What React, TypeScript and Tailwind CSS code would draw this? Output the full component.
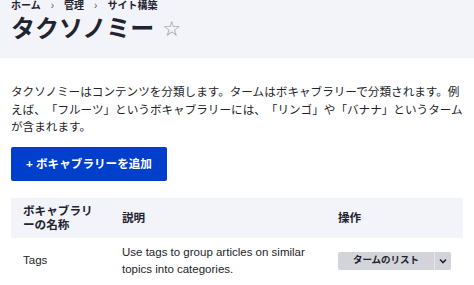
import React from "react";

export default function App() {
  const font = "font-['Liberation_Sans','Noto_Sans_CJK_JP',sans-serif]";
  return (
    <div className={`w-[474px] h-[285px] overflow-hidden bg-white text-[#222330] ${font} [text-spacing-trim:space-all]`}>
      <div className="bg-[#f3f4f9] h-[58px] px-[11px] overflow-hidden">
        <nav className="-mt-[1px] h-[14px] flex items-center text-[10px] leading-[14px] font-bold text-[#222330]">
          <span>ホーム</span>
          <span className="mx-[10px] text-[#55565b] font-normal">›</span>
          <span>管理</span>
          <span className="mx-[10px] text-[#55565b] font-normal">›</span>
          <span>サイト構築</span>
        </nav>
        <div className="mt-[1px] flex items-center h-[30px]">
          <h1 className="text-[24px] leading-[30px] font-bold text-[#222330]">タクソノミー</h1>
          <span className="ml-[8px] text-[21px] leading-[30px] text-[#8e929c] font-['DejaVu_Sans',sans-serif]">☆</span>
        </div>
      </div>

      <div className="px-[11px]">
        <p className="mt-[25px] w-[458px] text-[11.6px] leading-[17.5px] text-[#232429] font-['Noto_Sans_CJK_JP',sans-serif] [text-spacing-trim:space-all]">
          タクソノミーはコンテンツを分類します。タームはボキャブラリーで分類されます。例えば、「フルーツ」というボキャブラリーには、「リンゴ」や「バナナ」というタームが含まれます。
        </p>

        <button className="mt-[11px] h-[34px] w-[156px] rounded-[2px] bg-[#003ecc] text-white text-[11.6px] font-bold flex items-center justify-center">
          + ボキャブラリーを追加
        </button>

        <table className="mt-[17px] w-[452px] border-collapse table-fixed">
          <colgroup>
            <col className="w-[99px]" />
            <col className="w-[216px]" />
            <col className="w-[137px]" />
          </colgroup>
          <thead>
            <tr className="bg-[#f3f4f9] h-[40px]">
              <th className="px-[12px] py-[6px] text-left text-[11.6px] leading-[14px] font-bold align-middle">
                ボキャブラリーの名称
              </th>
              <th className="px-[12px] py-[6px] text-left text-[11.6px] leading-[14px] font-bold align-middle">
                説明
              </th>
              <th className="px-[12px] py-[6px] text-left text-[11.6px] leading-[14px] font-bold align-middle">
                操作
              </th>
            </tr>
          </thead>
          <tbody>
            <tr>
              <td className="px-[12px] py-[6px] text-[11.5px] leading-[17px] align-middle text-[#232429]">Tags</td>
              <td className="px-[12px] py-[6px] text-[11.5px] leading-[17px] align-middle text-[#232429]">
                Use tags to group articles on similar topics into categories.
              </td>
              <td className="px-[12px] py-[6px] align-middle">
                <div className="flex h-[18px] w-[113px] rounded-[2px] bg-[#d3d4d9] overflow-hidden">
                  <span className="w-[96px] flex items-center justify-center text-[9.5px] font-bold text-[#222330]">
                    タームのリスト
                  </span>
                  <span className="w-px bg-[#e6e7eb]" />
                  <span className="flex-1 flex items-center justify-center">
                    <svg width="8" height="6" viewBox="0 0 8 6">
                      <path d="M1 1.5 L4 4.5 L7 1.5" fill="none" stroke="#222330" strokeWidth="1.6" />
                    </svg>
                  </span>
                </div>
              </td>
            </tr>
          </tbody>
        </table>
      </div>
    </div>
  );
}
